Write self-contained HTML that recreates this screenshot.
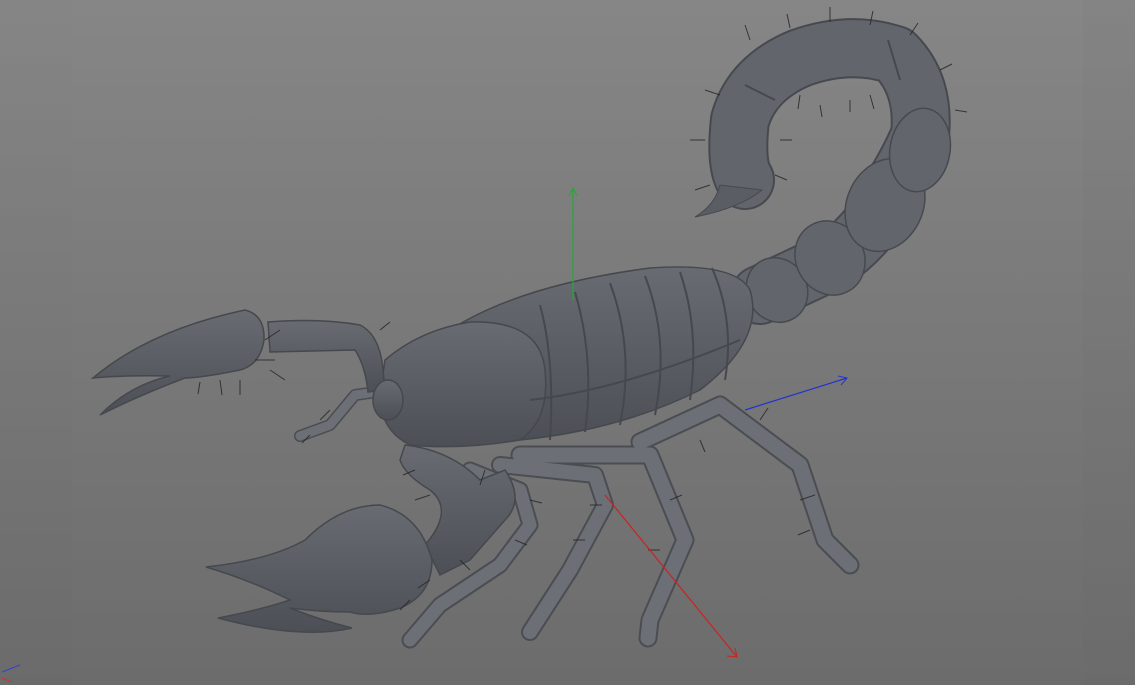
<!DOCTYPE html>
<html><head><meta charset="utf-8"><style>
html,body{margin:0;padding:0;width:1135px;height:685px;overflow:hidden}
body{background:linear-gradient(#868686,#7a7a7a 45%,#6c6c6c)}
.s{position:absolute;top:0;height:685px}
</style></head><body>
<div class="s" style="left:0;width:72px;background:linear-gradient(#858585,#6a6a6a);opacity:.6"></div>
<div class="s" style="left:1083px;width:52px;background:linear-gradient(#828282,#6a6a6a);opacity:.6"></div>
<svg width="1135" height="685" style="position:absolute;left:0;top:0" xmlns="http://www.w3.org/2000/svg">
<defs>
<linearGradient id="g" x1="0" y1="0" x2="0" y2="1"><stop offset="0" stop-color="#686c72"/><stop offset="1" stop-color="#4c4f55"/></linearGradient>
</defs>
<!-- legs -->
<g fill="none" stroke-linecap="round" stroke-linejoin="round">
<g stroke="#4a4d52">
<path d="M300 436 L330 425 L355 395 L390 390" stroke-width="12"/>
<path d="M640 442 L720 405 L800 465 L825 540 L850 565" stroke-width="19"/>
<path d="M520 455 L650 455 L685 540 L650 620 L648 638" stroke-width="19"/>
<path d="M500 465 L595 475 L605 505 L570 570 L530 632" stroke-width="18"/>
<path d="M470 470 L520 490 L530 525 L500 565 L440 605 L410 640" stroke-width="17"/>
</g>
<g stroke="#6c7076">
<path d="M300 436 L330 425 L355 395 L390 390" stroke-width="9"/>
<path d="M640 442 L720 405 L800 465 L825 540 L850 565" stroke-width="15"/>
<path d="M520 455 L650 455 L685 540 L650 620 L648 638" stroke-width="15"/>
<path d="M500 465 L595 475 L605 505 L570 570 L530 632" stroke-width="14"/>
<path d="M470 470 L520 490 L530 525 L500 565 L440 605 L410 640" stroke-width="13"/>
</g>
</g>
<!-- tail -->
<g fill="none" stroke-linecap="round" stroke-linejoin="round">
<path d="M760 295 L830 262 Q870 235 885 200 Q910 160 920 135 Q925 85 895 55 Q850 40 800 58 Q752 78 740 120 Q735 165 745 180" stroke="#46494e" stroke-width="60"/>
<path d="M760 295 L830 262 Q870 235 885 200 Q910 160 920 135 Q925 85 895 55 Q850 40 800 58 Q752 78 740 120 Q735 165 745 180" stroke="#62666c" stroke-width="56"/>
</g>
<g fill="#62666c" stroke="#46494e" stroke-width="1.5">
<ellipse cx="777" cy="290" rx="30" ry="33" transform="rotate(-30 777 290)"/>
<ellipse cx="830" cy="258" rx="34" ry="38" transform="rotate(-30 830 258)"/>
<ellipse cx="885" cy="205" rx="38" ry="48" transform="rotate(25 885 205)"/>
<ellipse cx="920" cy="150" rx="30" ry="42" transform="rotate(10 920 150)"/>
</g>
<path d="M720 185 Q715 205 695 217 Q740 208 762 190 Z" fill="#5a5e64" stroke="#46494e"/>
<g fill="none" stroke="#46494e" stroke-width="2">
<path d="M888 40 L900 80"/><path d="M745 85 L775 100"/>
</g>
<g fill="url(#g)" stroke="#45484d" stroke-width="1.5">
<!-- body -->
<path d="M450 330 Q520 285 650 268 Q735 262 750 290 Q765 340 700 390 Q620 430 520 440 Q460 440 430 420 Z"/>
<path d="M385 360 Q420 330 470 322 Q540 320 545 370 Q550 420 520 440 Q460 450 410 445 Q380 430 380 395 Z"/>
</g>
<g fill="none" stroke="#45484d" stroke-width="2">
<path d="M540 305 Q555 360 550 440"/><path d="M575 292 Q595 360 585 432"/><path d="M610 283 Q635 350 620 425"/><path d="M645 276 Q670 340 655 415"/><path d="M680 272 Q700 330 690 400"/><path d="M712 268 Q735 320 725 380"/><path d="M530 400 Q620 390 740 340"/>
</g>
<g fill="url(#g)" stroke="#45484d" stroke-width="1.5">
<path d="M268 322 Q320 318 360 325 Q380 335 383 370 L385 390 L368 392 Q365 365 355 350 L270 352 Z"/>
<path d="M93 378 Q150 330 245 310 Q265 315 264 340 Q260 365 240 370 Q200 378 185 378 Q140 395 100 415 Q130 385 170 376 Q125 375 93 378 Z"/>
<ellipse cx="388" cy="400" rx="15" ry="20"/>
<path d="M405 445 Q450 450 480 480 L505 470 Q525 500 505 520 L470 560 L440 575 L425 545 Q455 510 430 490 Q405 475 400 460 Z"/>
<path d="M206 567 Q270 560 305 540 Q340 505 380 505 Q420 515 432 560 Q432 595 400 608 Q370 618 350 612 Q320 612 290 608 Q320 620 352 628 Q300 640 218 618 Q260 610 290 600 Q250 580 206 567 Z"/>
</g>
<!-- hairs -->
<g stroke="#222" stroke-width="1" opacity=".8">
<path d="M750 40 l-5 -15 M790 28 l-3 -14 M830 22 l0 -15 M870 25 l3 -14 M910 35 l8 -12 M940 70 l12 -6 M955 110 l12 2 M720 95 l-15 -5 M705 140 l-15 0 M710 185 l-15 5 M775 175 l12 5 M780 140 l12 0 M850 100 l0 12 M820 105 l2 12 M800 95 l-2 14 M870 95 l4 14 M265 340 l15 -10 M255 360 l20 0 M270 370 l15 10 M380 330 l10 -8 M330 410 l-10 10 M310 435 l-8 8 M415 470 l-12 5 M430 495 l-15 5 M480 485 l5 -15 M530 500 l12 3 M515 540 l12 5 M590 505 l12 0 M585 540 l-12 0 M670 500 l12 -5 M660 550 l-12 0 M800 500 l15 -5 M810 530 l-12 5 M760 420 l8 -12 M700 440 l5 12 M410 600 l-10 10 M430 580 l-12 8 M460 560 l10 10 M240 380 l0 15 M220 380 l2 15 M200 382 l-2 12"/>
</g>
<!-- axes -->
<line x1="573" y1="300" x2="573" y2="188" stroke="#22aa33" stroke-width="1.2"/>
<path d="M569 196 L573 188 L577 196" fill="none" stroke="#22aa33"/>
<line x1="745" y1="410" x2="847" y2="378" stroke="#2233cc" stroke-width="1.2"/>
<path d="M838 376 L847 378 L841 385" fill="none" stroke="#2233cc"/>
<line x1="605" y1="495" x2="737" y2="657" stroke="#cc2222" stroke-width="1.2"/>
<path d="M727 656 L737 657 L735 648" fill="none" stroke="#cc2222"/>
<line x1="2" y1="672" x2="20" y2="665" stroke="#3344cc"/>
<line x1="2" y1="678" x2="12" y2="682" stroke="#cc3333"/>
</svg>
</body></html>
